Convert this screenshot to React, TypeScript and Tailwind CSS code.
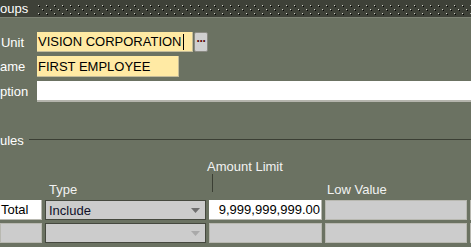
import type { ReactNode } from "react";

function Label({ children }: { children: ReactNode }) {
  return <div className="w-[24px] shrink-0 whitespace-nowrap text-right text-white">{children}</div>;
}

function Arrow({ muted }: { muted?: boolean }) {
  return (
    <svg width="9" height="5" viewBox="0 0 9 5" className="shrink-0" aria-hidden>
      <path d="M0 0h9L4.5 5z" fill={muted ? "#a9a9a9" : "#6f6f6f"} />
    </svg>
  );
}

function HeaderDots() {
  return (
    <svg className="h-[11px] flex-1" aria-hidden>
      <defs>
        <pattern id="dots" width="8" height="8" patternUnits="userSpaceOnUse">
          <rect x="0" y="0" width="1" height="1" fill="#d0d0c8" />
          <rect x="1" y="1" width="1" height="1" fill="#000" />
          <rect x="4" y="4" width="1" height="1" fill="#d0d0c8" />
          <rect x="5" y="5" width="1" height="1" fill="#000" />
        </pattern>
      </defs>
      <rect x="0" y="0" width="100%" height="100%" fill="url(#dots)" />
    </svg>
  );
}

export default function App() {
  return (
    <div
      className="h-[247px] w-[471px] overflow-hidden bg-[#6b7262] text-[13px] leading-[15px]"
      style={{ fontFamily: '"Liberation Sans", Arial, sans-serif' }}
    >
      {/* title bar */}
      <div className="flex h-[18px] items-center border-b border-[#7d8374] bg-[#3e4138]">
        <span className="text-white">oups</span>
        <div className="ml-[10px] flex flex-1 items-center pt-[3px]">
          <HeaderDots />
        </div>
      </div>

      {/* header fields */}
      <div className="mt-[14px] flex flex-col gap-[4px]">
        <div className="flex items-center">
          <Label>Unit</Label>
          <div className="ml-[13px] flex h-[20px] w-[156px] items-center border-r border-b border-[#c4bc9a] bg-[#ffeaa4] pl-[1px] text-black">
            VISION CORPORATION
            <span className="ml-[1px] h-[16px] w-px bg-black" />
          </div>
          <div className="ml-[1px] flex h-[20px] w-[14px] items-center justify-center rounded-[2px] border border-[#8a8a82] bg-[#cfcfcf]">
            <span className="mb-[3px] text-[12px] font-bold leading-none tracking-[-1px] text-[#5a0808]">···</span>
          </div>
        </div>
        <div className="flex items-center">
          <Label>ame</Label>
          <div className="ml-[13px] flex h-[21px] w-[142px] items-center border-r border-b border-[#c4bc9a] bg-[#ffeaa4] pl-[1px] text-black">
            FIRST EMPLOYEE
          </div>
        </div>
        <div className="flex items-center">
          <Label>ption</Label>
          <div className="ml-[13px] h-[21px] flex-1 border-b-2 border-[#b4b4ac] bg-white" />
        </div>
      </div>

      {/* rules section */}
      <div className="mt-[31px] flex h-[15px] items-center">
        <span className="text-white">ules</span>
        <div className="mb-[3px] ml-[5px] h-px flex-1 bg-[#3b3f34]" />
      </div>

      {/* table header */}
      <div className="mt-[11px] flex h-[41px] text-[#f2f2f2]">
        <div className="w-[42px] shrink-0" />
        <div className="ml-[3px] flex w-[161px] shrink-0 items-end pb-[3px] pl-[4px]">Type</div>
        <div className="ml-[3px] flex w-[113px] shrink-0 flex-col">
          <span className="-ml-[2px] whitespace-nowrap">Amount Limit</span>
          <span className="ml-[3px] h-[18px] w-px bg-[#3b3f34]" />
        </div>
        <div className="ml-[3px] flex w-[142px] shrink-0 items-end pb-[3px] pl-[2px]">Low Value</div>
      </div>

      {/* rows */}
      <div className="flex flex-col gap-[3px]">
        <div className="flex h-[20px]">
          <div className="flex w-[42px] shrink-0 items-center border-r border-b border-[#b9b9b1] bg-white pl-[1px] text-black">
            Total
          </div>
          <div className="ml-[3px] flex w-[161px] shrink-0 items-center justify-between border border-[#45483e] bg-[#cccccc] pl-[3px] pr-[5px] text-[#10102a]">
            Include
            <Arrow />
          </div>
          <div className="ml-[3px] flex w-[113px] shrink-0 items-center justify-end border-r border-b border-[#b9b9b1] bg-white pr-[1px] text-black">
            9,999,999,999.00
          </div>
          <div className="ml-[3px] w-[142px] shrink-0 border border-[#b8b8b0] bg-[#cccccc]" />
          <div className="ml-[3px] flex-1 border border-[#b8b8b0] bg-[#cccccc]" />
        </div>
        <div className="flex h-[20px]">
          <div className="w-[42px] shrink-0 border border-[#b8b8b0] bg-[#cccccc]" />
          <div className="ml-[3px] flex w-[161px] shrink-0 items-center justify-end border border-[#45483e] bg-[#cccccc] pr-[5px]">
            <Arrow muted />
          </div>
          <div className="ml-[3px] w-[113px] shrink-0 border border-[#b8b8b0] bg-[#cccccc]" />
          <div className="ml-[3px] w-[142px] shrink-0 border border-[#b8b8b0] bg-[#cccccc]" />
          <div className="ml-[3px] flex-1 border border-[#b8b8b0] bg-[#cccccc]" />
        </div>
      </div>
    </div>
  );
}
